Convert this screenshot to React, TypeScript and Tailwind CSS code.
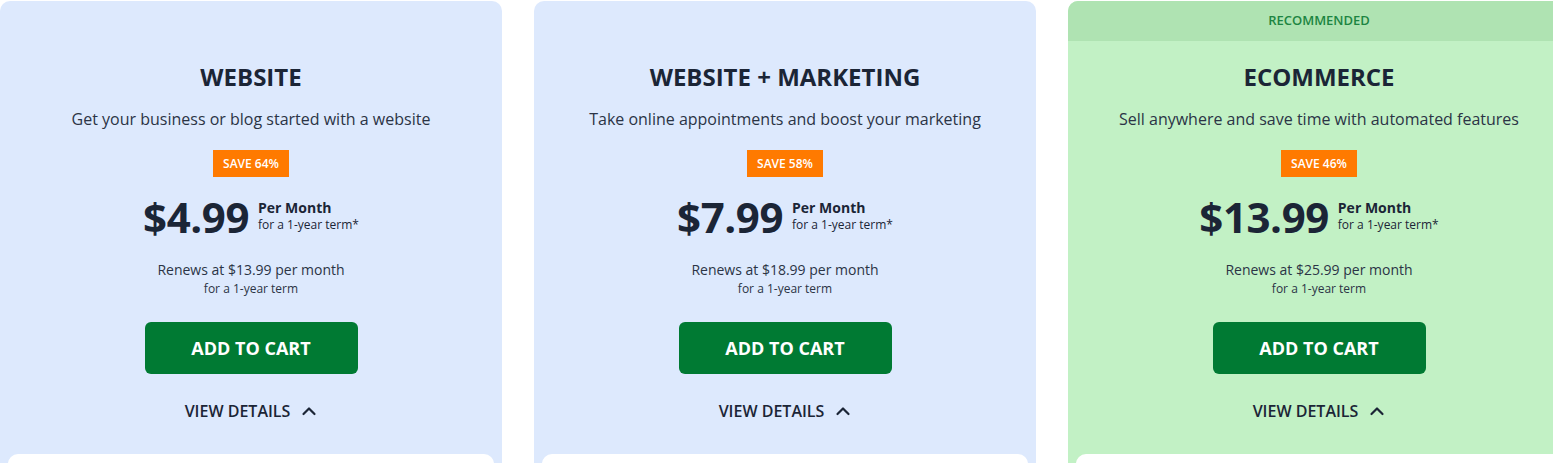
import React from 'react';

interface Plan {
  title: string;
  tagline: string;
  save: string;
  price: string;
  renews: string;
  recommended?: boolean;
}

const plans: Plan[] = [
  {
    title: 'WEBSITE',
    tagline: 'Get your business or blog started with a website',
    save: 'SAVE 64%',
    price: '$4.99',
    renews: 'Renews at $13.99 per month',
  },
  {
    title: 'WEBSITE + MARKETING',
    tagline: 'Take online appointments and boost your marketing',
    save: 'SAVE 58%',
    price: '$7.99',
    renews: 'Renews at $18.99 per month',
  },
  {
    title: 'ECOMMERCE',
    tagline: 'Sell anywhere and save time with automated features',
    save: 'SAVE 46%',
    price: '$13.99',
    renews: 'Renews at $25.99 per month',
    recommended: true,
  },
];

function ChevronUp() {
  return (
    <svg width="16" height="16" viewBox="0 0 16 16" fill="none" className="ml-[11px]">
      <path d="M2.5 11 L8 5.5 L13.5 11" stroke="#1b2536" strokeWidth="2.2" strokeLinecap="round" strokeLinejoin="round" />
    </svg>
  );
}

function PlanCard({ plan }: { plan: Plan }) {
  return (
    <div
      className={`flex w-[502px] flex-none flex-col overflow-hidden rounded-[10px] ${
        plan.recommended ? 'bg-[#c2f1c5]' : 'bg-[#dde9fd]'
      }`}
    >
      {/* Top ribbon */}
      <div
        className={`flex h-[40px] items-center justify-center text-[13px] font-semibold text-[#1d8542] ${
          plan.recommended ? 'bg-[#afe3b2]' : ''
        }`}
      >
        {plan.recommended ? 'RECOMMENDED' : ''}
      </div>

      <div className="flex flex-col items-center pt-[20px] text-[#1b2536]">
        <h2 className="text-[24px] leading-[32px] font-bold">{plan.title}</h2>
        <p className="mt-[14px] text-[16px] leading-[24px] text-[#2b3445]">{plan.tagline}</p>

        <div className="mt-[19px] flex h-[27px] items-center bg-[#ff7a00] px-[10px] text-[12px] font-semibold text-white">
          {plan.save}
        </div>

        <div className="mt-[14px] flex items-center">
          <span className="text-[42px] leading-[52px] font-bold tracking-[-0.01em]">{plan.price}</span>
          <div className="ml-[9px] flex flex-col pb-[2px]">
            <span className="text-[14px] leading-[18px] font-bold">Per Month</span>
            <span className="text-[12px] leading-[16px]">for a 1-year term*</span>
          </div>
        </div>

        <p className="mt-[17px] text-[14px] leading-[20px] text-[#2b3445]">{plan.renews}</p>
        <p className="text-[12px] leading-[18px] text-[#2b3445]">for a 1-year term</p>

        <button className="mt-[24px] flex h-[52px] w-[213px] items-center justify-center rounded-[6px] bg-[#007a33] text-[18px] font-bold text-white">
          ADD TO CART
        </button>

        <button className="mt-[25px] flex items-center text-[16px] leading-[24px] font-semibold text-[#1b2536]">
          VIEW DETAILS
          <ChevronUp />
        </button>
      </div>

      <div className="mx-[8px] mt-[31px] h-[40px] rounded-t-[10px] bg-white" />
    </div>
  );
}

export default function App() {
  return (
    <div className="h-[463px] w-[1553px] overflow-hidden bg-white font-['Open_Sans',sans-serif]">
      <div className="flex gap-[32px] pt-[1px]">
        {plans.map((plan) => (
          <PlanCard key={plan.title} plan={plan} />
        ))}
      </div>
    </div>
  );
}
